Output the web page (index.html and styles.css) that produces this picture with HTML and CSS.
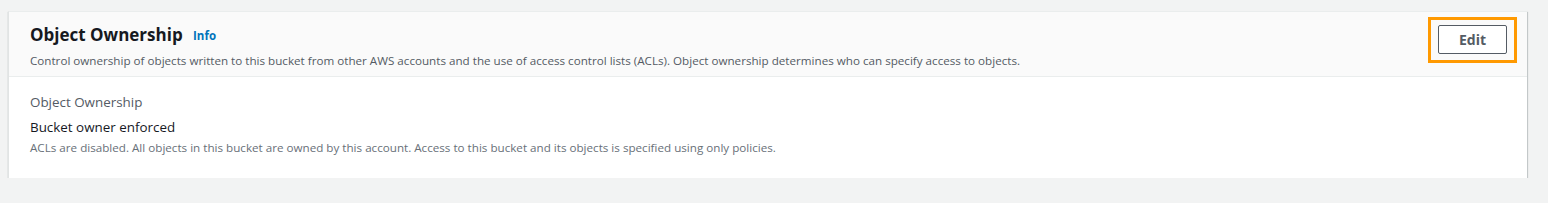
FILE: index.html
```html
<!DOCTYPE html>
<html lang="en">
  <head>
    <meta charset="UTF-8" />
    <title>Object Ownership</title>
    <link rel="stylesheet" href="styles.css">
  </head>
  <body>
    <div class="container">
      <div class="header">
        <div class="header-text">
          <h2>Object Ownership <a class="info" href="#">Info</a></h2>
          <p class="desc">Control ownership of objects written to this bucket from other AWS accounts and the use of access control lists (ACLs). Object ownership determines who can specify access to objects.</p>
        </div>
        <div class="actions">
          <button class="edit-btn">Edit</button>
        </div>
      </div>
      <div class="content">
        <div class="label">Object Ownership</div>
        <div class="value">Bucket owner enforced</div>
        <div class="hint">ACLs are disabled. All objects in this bucket are owned by this account. Access to this bucket and its objects is specified using only policies.</div>
      </div>
    </div>
  </body>
</html>
```

FILE: styles.css
```css
body {
  margin: 0;
  padding: 11px 21px 0 8px;
  background: #f2f3f3;
  font-family: "Open Sans", Arial, sans-serif;
  color: #16191f;
}

.container {
  background: white;
  border-top: 1px solid #eaeded;
  border-left: 1px solid #e1e4e4;
  box-shadow: 0 1px 1px 0 rgba(0, 28, 36, 0.3), 1px 1px 1px 0 rgba(0, 28, 36, 0.15);
}

.header {
  background: #fafafa;
  border-bottom: 1px solid #eaeded;
  display: flex;
  justify-content: space-between;
  align-items: flex-start;
  padding: 5px 10px 6px 21px;
}

.header-text {
  padding-top: 7px;
}

h2 {
  margin: 0;
  font-size: 17px;
  line-height: 22px;
  font-weight: 700;
}

.info {
  font-size: 11.5px;
  font-weight: 700;
  color: #0073bb;
  text-decoration: none;
  margin-left: 6px;
  vertical-align: 1px;
}

.desc {
  margin: 5px 0 0;
  font-size: 11.65px;
  line-height: 18px;
  color: #545b64;
}

/* focus ring around the edit button */
.actions {
  border: 3px solid #ff9900;
  padding: 5px 7px 6px;
}

.edit-btn {
  display: block;
  font-family: inherit;
  font-size: 14px;
  font-weight: 700;
  color: #545b64;
  background: white;
  border: 1px solid #545b64;
  border-radius: 2px;
  padding: 0;
  height: 29px;
  width: 69px;
}

.content {
  padding: 15px 21px 22px;
}

.label {
  font-size: 13.4px;
  line-height: 20px;
  color: #545b64;
}

.value {
  margin-top: 5px;
  font-size: 13.4px;
  line-height: 20px;
}

.hint {
  margin-top: 3px;
  font-size: 11.65px;
  line-height: 16px;
  color: #687078;
}
```
